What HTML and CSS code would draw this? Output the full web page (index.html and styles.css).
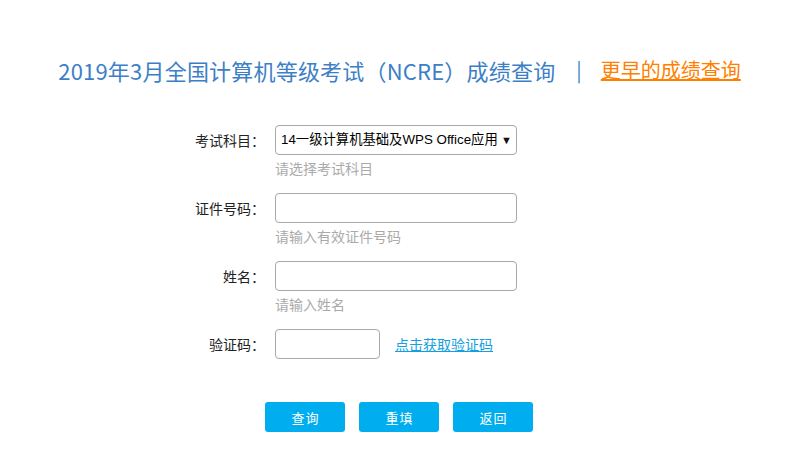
FILE: index.html
```html
<!DOCTYPE html>
<html lang="zh-CN">
<head>
<meta charset="utf-8">
<title>成绩查询</title>
<link rel="stylesheet" href="styles.css">
</head>
<body>
<div class="header">
  <span class="title">2019年3月全国计算机等级考试（NCRE）成绩查询</span>
  <span class="sep">|</span>
  <a class="more" href="#">更早的成绩查询</a>
</div>
<div class="form">
  <div class="row">
    <label class="label">考试科目：</label>
    <div class="field">
      <div class="select">
        <span class="select-text">14一级计算机基础及WPS Office应用</span>
        <span class="arrow">▼</span>
      </div>
      <div class="hint">请选择考试科目</div>
    </div>
  </div>
  <div class="row">
    <label class="label">证件号码：</label>
    <div class="field">
      <input class="input" type="text">
      <div class="hint">请输入有效证件号码</div>
    </div>
  </div>
  <div class="row">
    <label class="label">姓名：</label>
    <div class="field">
      <input class="input" type="text">
      <div class="hint">请输入姓名</div>
    </div>
  </div>
  <div class="row">
    <label class="label">验证码：</label>
    <div class="field captcha-field">
      <input class="input small" type="text">
      <a class="captcha-link" href="#">点击获取验证码</a>
    </div>
  </div>
</div>
<div class="buttons">
  <button class="btn">查询</button>
  <button class="btn">重填</button>
  <button class="btn">返回</button>
</div>
</body>
</html>
```
FILE: styles.css
```css
html, body {
  margin: 0;
  padding: 0;
  background: #fff;
}
body {
  font-family: "Noto Sans CJK SC", "Liberation Sans", sans-serif;
  font-size: 14px;
  color: #222;
}
.header {
  display: flex;
  justify-content: center;
  align-items: center;
  padding-top: 55px;
  padding-left: 7px;
  height: 30px;
  line-height: 30px;
  font-size: 20px;
}
.title {
  color: #3d7fc6;
  font-size: 22px;
  letter-spacing: 0.2px;
}
.sep {
  color: #3d7fc6;
  margin: 0 19px 0 21px;
}
.more {
  color: #ff7f00;
  text-decoration: underline;
}
.form {
  margin-top: 40px;
  padding-left: 165px;
}
.row {
  display: flex;
  align-items: flex-start;
  margin-bottom: 15px;
}
.label {
  width: 100px;
  text-align: right;
  line-height: 30px;
  margin-right: 10px;
  color: #222;
}
.field {
  display: flex;
  flex-direction: column;
}
.captcha-field {
  flex-direction: row;
  align-items: center;
}
.select {
  position: relative;
  box-sizing: border-box;
  width: 242px;
  height: 30px;
  border: 1px solid #a9a9a9;
  border-radius: 4px;
  padding-left: 5px;
  line-height: 28px;
  font-family: "Liberation Sans", "Noto Sans CJK SC", sans-serif;
  font-size: 13.333px;
  color: #000;
  white-space: nowrap;
  overflow: hidden;
}
.arrow {
  position: absolute;
  right: 4px;
  top: 0;
  font-size: 11px;
  color: #111;
}
.input {
  box-sizing: border-box;
  width: 242px;
  height: 30px;
  margin: 0;
  border: 1px solid #a9a9a9;
  border-radius: 4px;
  background: #fff;
  outline: none;
}
.input.small {
  width: 105px;
}
.hint {
  margin-top: 3px;
  line-height: 20px;
  color: #aaa;
}
.captcha-link {
  margin-left: 15px;
  color: #12a0e0;
  text-decoration: underline;
}
.buttons {
  display: flex;
  justify-content: center;
  gap: 14px;
  margin-top: 43px;
  padding-left: 6px;
}
.btn {
  width: 80px;
  height: 30px;
  border: none;
  border-radius: 3px;
  background: #00aeef;
  color: #fff;
  font-family: "Noto Sans CJK SC", sans-serif;
  font-size: 13px;
  letter-spacing: 1px;
  padding: 0 0 0 1px;
}
```
